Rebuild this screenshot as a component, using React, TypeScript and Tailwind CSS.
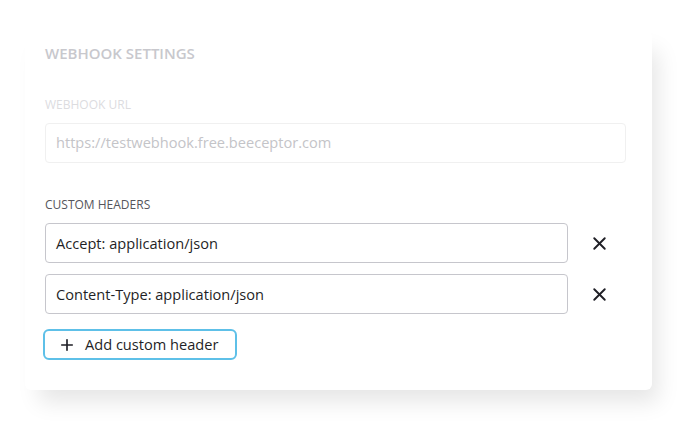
import { X, Plus } from 'lucide-react';

const headers = ['Accept: application/json', 'Content-Type: application/json'];

export default function App() {
  return (
    <div
      className="w-[688px] h-[430px] bg-white overflow-hidden pt-[31px] pl-[25px]"
      style={{ fontFamily: '"Open Sans", "Noto Sans", sans-serif' }}
    >
      <div className="w-[627px] h-[359px] bg-white rounded-md shadow-[10px_16px_22px_-4px_rgba(0,0,0,0.1)] pl-[20px] pt-[11px]">
        <h2 className="text-[15px] font-semibold text-[#c8c8cd] leading-[22px]">WEBHOOK SETTINGS</h2>

        <div className="mt-[33px] text-[12px] text-[#dcdcdf] leading-[16px]">WEBHOOK URL</div>
        <div className="mt-[10px] w-[581px] h-[40px] border border-[#f0f0f0] rounded-[4px] flex items-center px-[10px] text-[14.6px] text-[#c4c4c8]">
          https://testwebhook.free.beeceptor.com
        </div>

        <div className="mt-[34px] text-[12px] text-[#55555c] leading-[16px]">CUSTOM HEADERS</div>

        <div className="mt-[10px] flex flex-col gap-[11px]">
          {headers.map((h) => (
            <div key={h} className="flex items-center">
              <div className="w-[523px] h-[40px] border border-[#c6c6cc] rounded-[4px] flex items-center px-[10px] pt-[1px] text-[14.6px] text-[#1f1f26]">
                {h}
              </div>
              <X className="ml-[21px] text-[#1f1f26]" size={21} strokeWidth={2.2} />
            </div>
          ))}
        </div>

        <button className="mt-[15px] -ml-[2px] h-[31px] pl-[13px] pr-[17px] border-2 border-[#5ec0e8] rounded-[6px] flex items-center gap-[9px] text-[14.6px] font-medium text-[#1f1f26]">
          <Plus size={18} strokeWidth={2.2} />
          Add custom header
        </button>
      </div>
    </div>
  );
}
